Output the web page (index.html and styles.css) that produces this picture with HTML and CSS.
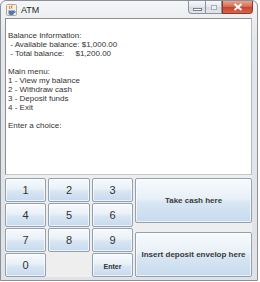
FILE: index.html
```html
<!DOCTYPE html>
<html>
<head>
<meta charset="utf-8">
<link rel="stylesheet" href="styles.css">
</head>
<body>
<div class="window">
  <div class="titlebar">
    <svg class="appicon" width="11" height="12" viewBox="0 0 11 12">
      <rect x="0.5" y="0.5" width="10" height="11" rx="1" fill="#f3efe6" stroke="#b9a88c"/>
      <path d="M4 2 q-1 1.5 0 3 M6 1.5 q-1 1.5 0 3" stroke="#e0641c" stroke-width="1" fill="none"/>
      <path d="M2.5 6.5 h5.5 v2.5 a2 2 0 0 1 -2 2 h-1.5 a2 2 0 0 1 -2 -2z" fill="#4a7ab8"/>
      <path d="M8 7 h1 v1.5 h-1" stroke="#4a7ab8" fill="none"/>
    </svg>
    <span class="title">ATM</span>
    <div class="controls">
      <span class="ctl min"><i></i></span>
      <span class="ctl max"><i></i></span>
      <span class="ctl close">
        <svg width="10" height="8" viewBox="0 0 10 8"><path d="M1.5 1 L8.5 7 M8.5 1 L1.5 7" stroke="#fff" stroke-width="2"/></svg>
      </span>
    </div>
  </div>
  <div class="client">
    <div class="screen"><pre class="output">

Balance Information:
 - Available balance: $1,000.00
 - Total balance:     $1,200.00

Main menu:
1 - View my balance
2 - Withdraw cash
3 - Deposit funds
4 - Exit

Enter a choice:</pre></div>
    <div class="lower">
      <div class="keypad">
        <button class="key">1</button>
        <button class="key">2</button>
        <button class="key">3</button>
        <button class="key">4</button>
        <button class="key">5</button>
        <button class="key">6</button>
        <button class="key">7</button>
        <button class="key">8</button>
        <button class="key">9</button>
        <button class="key">0</button>
        <span class="blank"></span>
        <button class="key enter">Enter</button>
      </div>
      <div class="slots">
        <button class="key slot">Take cash here</button>
        <button class="key slot">Insert deposit envelop here</button>
      </div>
    </div>
  </div>
</div>
</body>
</html>
```

FILE: styles.css
```css
* { box-sizing: border-box; }
html, body { margin: 0; padding: 0; background: #ffffff; }
body { width: 260px; height: 282px; overflow: hidden; font-family: "Liberation Sans", Arial, sans-serif; }

.window {
  width: 258px;
  height: 281px;
  border: 1px solid #8b9097;
  border-radius: 6px 6px 0 0;
  background: linear-gradient(#f4f5f7, #e3e6ea 40px, #dfe2e6);
  padding: 0 3px 3px 3px;
  display: flex;
  flex-direction: column;
}

.titlebar {
  height: 17px;
  display: flex;
  align-items: flex-start;
  flex-shrink: 0;
}
.appicon { margin: 3px 0 0 2px; }
.title {
  font-size: 9px;
  color: #1e1e1e;
  margin: 4px 0 0 4px;
  text-shadow: 0 0 6px rgba(255,255,255,0.9);
}
.controls {
  margin-left: auto;
  margin-right: 1px;
  display: flex;
}
.ctl {
  height: 13px;
  border: 1px solid #8d939b;
  border-top: none;
  display: flex;
  align-items: center;
  justify-content: center;
}
.min, .max {
  width: 17px;
  background: linear-gradient(#f7f8fa, #e4e7eb 50%, #d6dae0 51%, #e2e6ea);
}
.min { border-radius: 0 0 0 4px; border-right: none; }
.min i { width: 7px; height: 1px; background: #fff; border: 1px solid #7b8290; margin-top: 4px; box-sizing: content-box; }
.max i { width: 6px; height: 5px; border: 1px solid #a9afb8; background: #eef0f3; }
.close {
  width: 31px;
  border-color: #8d3a2c;
  border-radius: 0 0 4px 0;
  background: linear-gradient(#e8a493, #d5674f 50%, #c6432a 51%, #d4664c);
}

.client {
  flex: 1;
  background: #eeeeee;
  display: flex;
  flex-direction: column;
  margin-right: 2px;
  margin-left: 1px;
}

.screen {
  height: 157px;
  background: #ffffff;
  border: 1px solid #8f8f8f;
  border-right-color: #b8b8b8;
  border-bottom-color: #c6c6c6;
  padding: 3px 2px;
}
.output {
  margin: 0;
  font-family: "Liberation Sans", Arial, sans-serif;
  font-size: 8px;
  line-height: 9px;
  color: #333333;
  white-space: pre;
}

.lower {
  margin-top: 3px;
  display: flex;
  gap: 2px;
}
.keypad {
  display: grid;
  grid-template-columns: 41px 42px 41px;
  grid-auto-rows: 24px;
  column-gap: 2px;
  row-gap: 1px;
}
.key {
  margin: 0;
  padding: 0;
  border: 1px solid #93a0ae;
  border-radius: 2px;
  background: linear-gradient(#f7fafd, #e9f0f7 45%, #d9e6f3 55%, #c6daee);
  box-shadow: inset 0 0 0 1px rgba(255,255,255,0.65);
  font-family: "Liberation Sans", Arial, sans-serif;
  font-size: 11px;
  color: #333333;
}
.enter { font-size: 7px; font-weight: bold; padding-top: 2px; }
.slots {
  width: 117px;
  display: flex;
  flex-direction: column;
  gap: 9px;
}
.slot {
  height: 45px;
  font-size: 8px;
  font-weight: bold;
  color: #3a3a3a;
}
```
